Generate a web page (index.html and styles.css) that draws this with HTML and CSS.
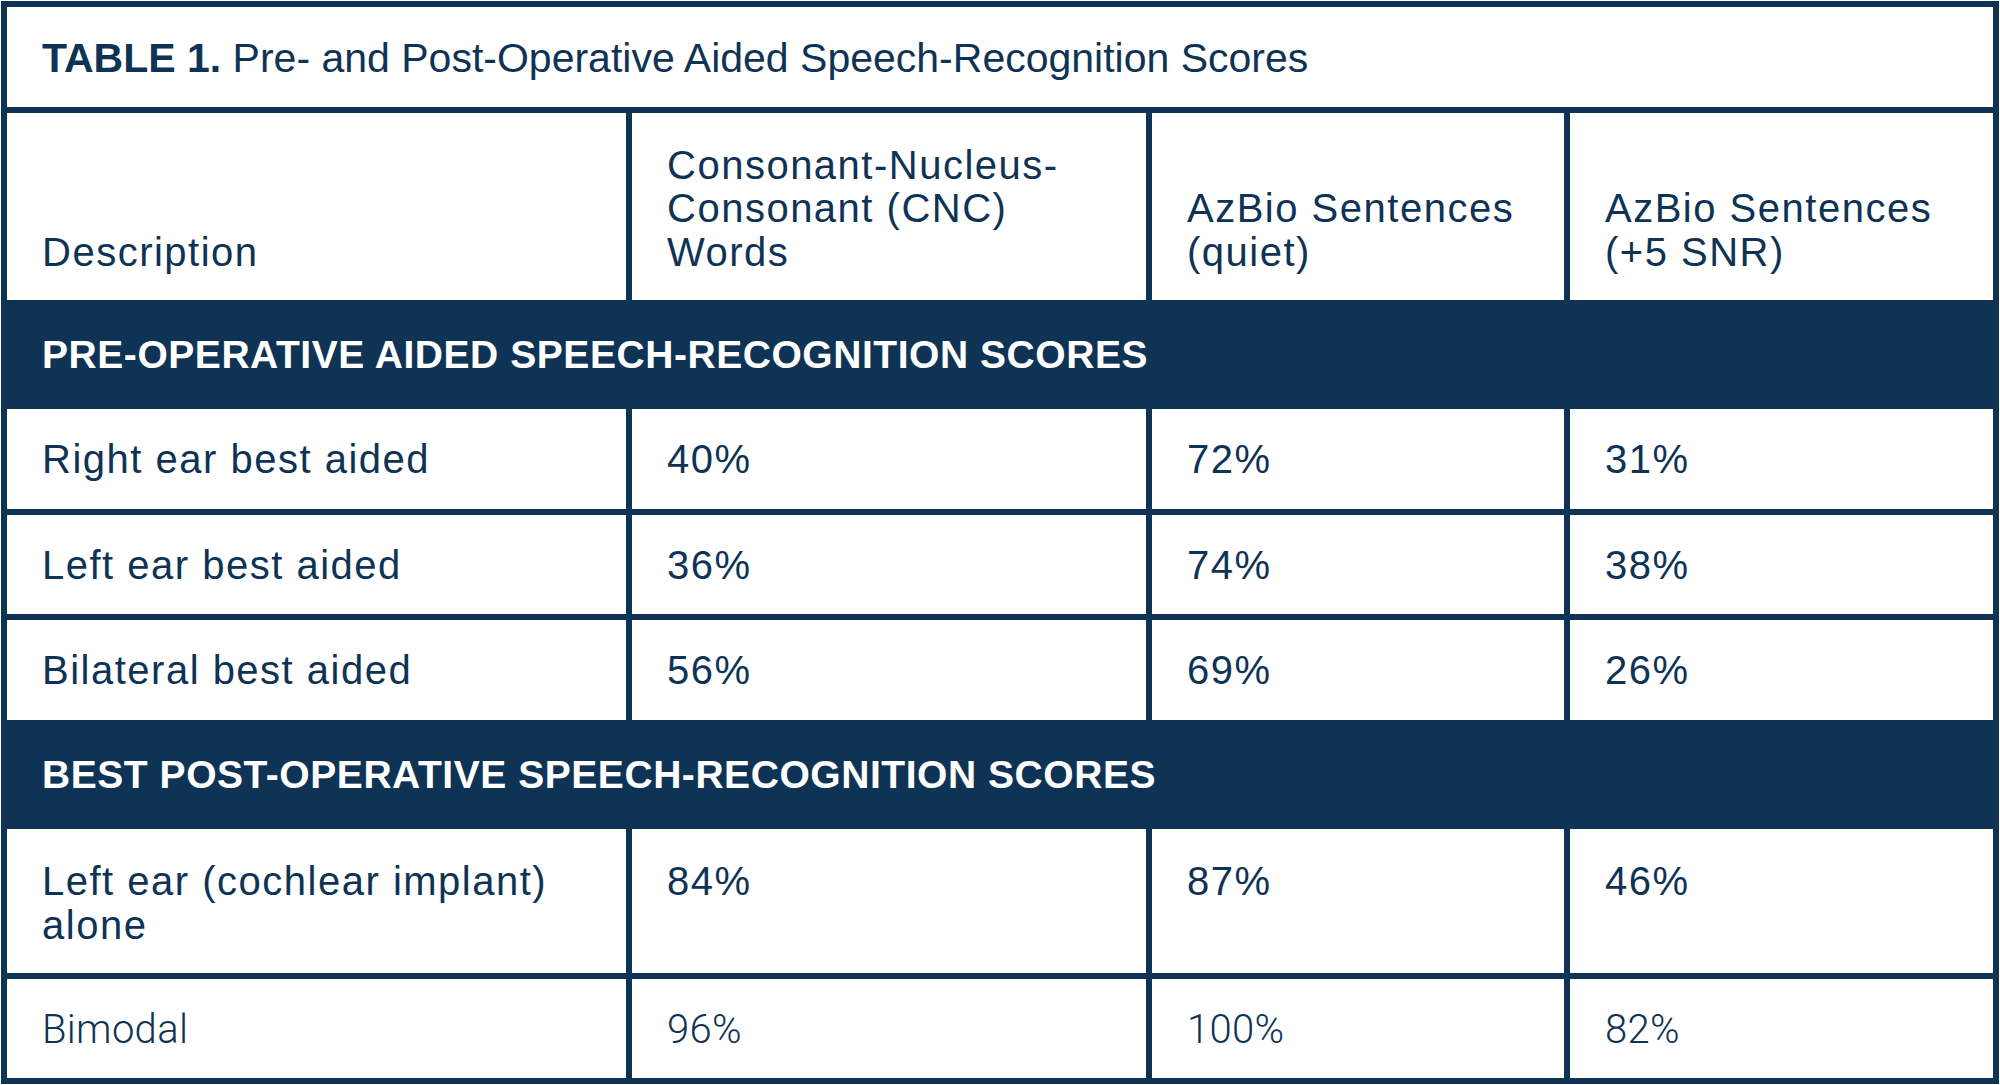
FILE: index.html
```html
<!DOCTYPE html>
<html lang="en">
<head>
<meta charset="utf-8">
<title>Table 1. Pre- and Post-Operative Aided Speech-Recognition Scores</title>
<link rel="stylesheet" href="styles.css">
</head>
<body>
<table class="scores">
  <colgroup>
    <col class="c-desc">
    <col class="c-cnc">
    <col class="c-quiet">
    <col class="c-snr">
  </colgroup>
  <tr class="r-title">
    <td colspan="4" class="title"><b>TABLE 1.</b> Pre- and Post-Operative Aided Speech-Recognition Scores</td>
  </tr>
  <tr class="r-head">
    <th>Description</th>
    <th>Consonant-Nucleus-<br>Consonant (CNC)<br>Words</th>
    <th>AzBio Sentences<br>(quiet)</th>
    <th>AzBio Sentences<br>(+5 SNR)</th>
  </tr>
  <tr class="r-band">
    <td colspan="4" class="band">PRE-OPERATIVE AIDED SPEECH-RECOGNITION SCORES</td>
  </tr>
  <tr class="r-data">
    <td>Right ear best aided</td><td>40%</td><td>72%</td><td>31%</td>
  </tr>
  <tr class="r-data r-short">
    <td>Left ear best aided</td><td>36%</td><td>74%</td><td>38%</td>
  </tr>
  <tr class="r-data">
    <td>Bilateral best aided</td><td>56%</td><td>69%</td><td>26%</td>
  </tr>
  <tr class="r-band">
    <td colspan="4" class="band">BEST POST-OPERATIVE SPEECH-RECOGNITION SCORES</td>
  </tr>
  <tr class="r-tall">
    <td>Left ear (cochlear implant)<br>alone</td><td>84%</td><td>87%</td><td>46%</td>
  </tr>
  <tr class="r-data r-short r-light">
    <td>Bimodal</td><td>96%</td><td>100%</td><td>82%</td>
  </tr>
</table>
</body>
</html>
```

FILE: styles.css
```css
html, body {
  margin: 0;
  padding: 0;
  background: #ffffff;
}

.scores {
  margin: 1px 0 0 1px;
  width: 1998px;
  table-layout: fixed;
  border-collapse: separate;
  border-spacing: 6px;
  background: #0f3355;
  font-family: "Liberation Sans", Arial, sans-serif;
  font-size: 40px;
  letter-spacing: 1.5px;
  color: #0f3355;
}

.c-desc { width: 619px; }
.c-cnc { width: 514px; }
.c-quiet { width: 412px; }
.c-snr { width: 423px; }

.scores td,
.scores th {
  background: #ffffff;
  padding: 2px 0 0 35px;
  text-align: left;
  font-weight: 400;
  line-height: 43.5px;
  vertical-align: middle;
}

.r-title { height: 100px; }
.scores .title {
  font-size: 41px;
  letter-spacing: 0;
  padding-top: 4px;
}
.title b {
  font-weight: 700;
}

.r-head { height: 187px; }
.scores .r-head th {
  vertical-align: bottom;
  padding-top: 0;
  padding-bottom: 26px;
}

.r-band { height: 97px; }
.scores .band {
  background: #0f3355;
  color: #ffffff;
  font-weight: 700;
  font-size: 39px;
  letter-spacing: 0.55px;
  padding-top: 1px;
}

.r-data { height: 100px; }
.r-short { height: 99px; }

.r-tall { height: 144px; }
.scores .r-tall td {
  vertical-align: top;
  padding-top: 31px;
}

.scores .r-light td {
  font-family: Roboto, "Liberation Sans", sans-serif;
  font-weight: 300;
  letter-spacing: 0.3px;
}
```
